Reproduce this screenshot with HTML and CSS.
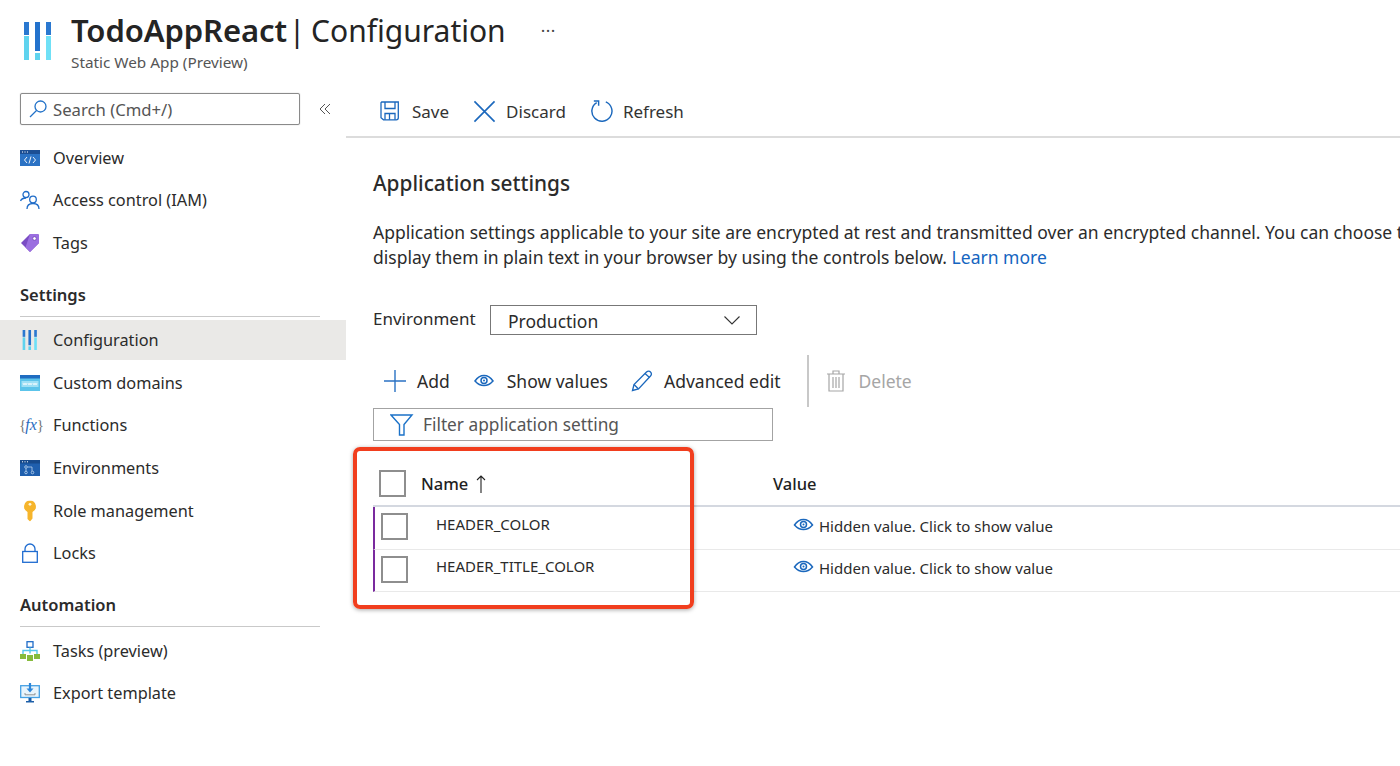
FILE: index.html
```html
<!DOCTYPE html>
<html lang="en">
<head>
<meta charset="utf-8">
<title>TodoAppReact | Configuration</title>
<link rel="stylesheet" href="styles.css">
</head>
<body>
<svg class="defs" width="0" height="0" aria-hidden="true">
  <symbol id="eye" viewBox="0 0 20 14">
    <path d="M1 7C3.500 3.200 6.500 1.400 10 1.400S16.500 3.200 19 7C16.500 9.800 13.500 11.600 10 11.600S3.500 9.800 1 7Z" fill="none" stroke="#1b68bd" stroke-width="1.500"/>
    <circle cx="10" cy="6.400" r="3" fill="none" stroke="#1b68bd" stroke-width="1.500"/>
    <circle cx="10" cy="6.400" r="1" fill="#1b68bd"/>
  </symbol>
  <symbol id="sliders" viewBox="0 0 28 38">
    <rect x="0" y="0" width="5" height="13" fill="#2a78d0"/>
    <rect x="0" y="14" width="5" height="24" fill="#5fd3ee"/>
    <rect x="11" y="0" width="5" height="29" fill="#2372cc"/>
    <rect x="11" y="31" width="5" height="7" fill="#5fd3ee"/>
    <rect x="22" y="0" width="5" height="13" fill="#2a78d0"/>
    <rect x="22" y="14" width="5" height="24" fill="#6fe0f6"/>
  </symbol>
</svg>

<header class="page-head">
  <svg class="head-icon" width="28" height="38"><use href="#sliders"/></svg>
  <div class="head-text">
    <div class="title-row">
      <h1 class="title"><b>TodoAppReact</b><span class="title-rest"> | Configuration</span></h1>
      <span class="more">···</span>
    </div>
    <div class="subtitle">Static Web App (Preview)</div>
  </div>
</header>

<div class="shell">
  <nav class="sidebar">
    <div class="search-row">
      <div class="search">
        <svg width="20" height="20" viewBox="0 0 20 20"><circle cx="12.500" cy="7.500" r="5.500" fill="none" stroke="#2272c8" stroke-width="1.300"/><path d="M8.500 11.500L2 18" stroke="#2272c8" stroke-width="1.300"/></svg>
        <span>Search (Cmd+/)</span>
      </div>
      <svg class="collapse" width="12" height="12" viewBox="0 0 12 12"><path d="M6 1L1 6l5 5M11 1L6 6l5 5" fill="none" stroke="#555" stroke-width="1"/></svg>
    </div>

    <a class="item">
      <svg class="ico" width="20" height="16" viewBox="0 0 20 16"><rect width="20" height="16" fill="#2b72c4"/><rect width="20" height="4" fill="#1c4f94"/><path d="M2 2h1M4.500 2h1M7 2h1" stroke="#fff"/><path d="M7 7l-2.500 3L7 13M13 7l2.500 3L13 13M11 6.500l-2 7" stroke="#fff" fill="none" stroke-width=".9"/></svg>
      <span>Overview</span>
    </a>
    <a class="item">
      <svg class="ico" width="20" height="20" viewBox="0 0 20 20" fill="none" stroke="#1f6cc8" stroke-width="1.300"><circle cx="6" cy="4.500" r="3"/><path d="M.5 11c.8-2 2.800-3 5.500-3"/><circle cx="13" cy="9.500" r="3.300"/><path d="M7 19c0-3.500 2.500-5.500 6-5.500s6 2 6 5.500"/></svg>
      <span>Access control (IAM)</span>
    </a>
    <a class="item">
      <svg class="ico" width="20" height="20" viewBox="0 0 20 20"><path d="M10 1h7.500a1.500 1.500 0 0 1 1.500 1.500V10l-9 9-9-9Z" fill="#7a4cc4"/><path d="M10 1h7.500a1.500 1.500 0 0 1 1.500 1.500V10l-9 9-4.500-4.500Z" fill="#9b6fe0"/><circle cx="14.500" cy="5.500" r="1.800" fill="#fff" stroke="#6a3fb0" stroke-width=".7"/></svg>
      <span>Tags</span>
    </a>

    <div class="section">Settings</div>
    <a class="item active">
      <svg class="ico" width="16" height="20"><use href="#sliders"/></svg>
      <span>Configuration</span>
    </a>
    <a class="item">
      <svg class="ico" width="20" height="16" viewBox="0 0 20 16"><rect width="20" height="16" fill="#5cc4ea"/><rect width="20" height="3.500" fill="#1f6cc0"/><rect x="1.500" y="6" width="17" height="6" fill="#9fe0f5"/><path d="M3 8l1 2 1-2 1 2 1-2M8 8l1 2 1-2 1 2 1-2M13 8l1 2 1-2 1 2 1-2" stroke="#fff" stroke-width=".7" fill="none"/></svg>
      <span>Custom domains</span>
    </a>
    <a class="item">
      <span class="fx"><i class="brace">{</i><i class="fx-f">fx</i><i class="brace">}</i></span>
      <span>Functions</span>
    </a>
    <a class="item">
      <svg class="ico" width="20" height="16" viewBox="0 0 20 16"><rect width="20" height="16" fill="#1f5fae"/><rect width="20" height="3.500" fill="#174a8c"/><path d="M2 1.800h1M4.500 1.800h1M7 1.800h1" stroke="#fff"/><circle cx="6" cy="7" r="1.300" fill="none" stroke="#cfe3f7" stroke-width=".7"/><circle cx="6" cy="12.500" r="1.300" fill="none" stroke="#cfe3f7" stroke-width=".7"/><circle cx="12.500" cy="12.500" r="1.300" fill="none" stroke="#cfe3f7" stroke-width=".7"/><path d="M7.500 7h4.500v4M6 8.500v2.500" stroke="#cfe3f7" stroke-width=".7" fill="none"/></svg>
      <span>Environments</span>
    </a>
    <a class="item">
      <svg class="ico key" width="14" height="21" viewBox="0 0 14 21"><path d="M7 0a6 6 0 0 1 2.500 11.400V18L7 21l-2.500-2.500V11.400A6 6 0 0 1 7 0Z" fill="#f6b52c"/><circle cx="7" cy="3.800" r="1.400" fill="#fff6d8"/></svg>
      <span>Role management</span>
    </a>
    <a class="item">
      <svg class="ico lock" width="16" height="20" viewBox="0 0 16 20" fill="none" stroke="#1f6cd0" stroke-width="1.300"><rect x=".7" y="8.500" width="14.600" height="10.800"/><path d="M3 8.500V6a5 5 0 0 1 10 0v2.500"/></svg>
      <span>Locks</span>
    </a>

    <div class="section automation">Automation</div>
    <a class="item tasks">
      <svg class="ico" width="20" height="20" viewBox="0 0 20 20"><rect x="7" y=".7" width="6" height="5.600" fill="#fff" stroke="#1f6cc8" stroke-width="1.300"/><path d="M10 6.500v6M3 13V9.500h14V13" stroke="#55c8ea" stroke-width="1.400" fill="none"/><rect y="13" width="6" height="5" fill="#86bb3c"/><rect x="7" y="14" width="6" height="6" fill="#86bb3c"/><rect x="14" y="13" width="6" height="5" fill="#86bb3c"/></svg>
      <span>Tasks (preview)</span>
    </a>
    <a class="item">
      <svg class="ico" width="20" height="20" viewBox="0 0 20 20"><rect x=".7" y="2.700" width="18.600" height="11.800" fill="#e8f4fc" stroke="#45a0e4" stroke-width="1.300"/><path d="M10 0v6.500" stroke="#2f86d8" stroke-width="2.200"/><path d="M6.500 5.500h7L10 9.500Z" fill="#2f86d8"/><path d="M5 10v1.800h10V10" stroke="#888" stroke-width=".9" fill="none"/><path d="M8.500 15h3v3h2.500v1.500H6V18h2.500Z" fill="#1c5ea8"/></svg>
      <span>Export template</span>
    </a>
  </nav>

  <main class="main">
    <div class="toolbar">
      <a class="tool save">
        <svg width="20" height="20" viewBox="0 0 20 20" fill="none" stroke="#1b68bd" stroke-width="1.300"><path d="M1.700 1h16.600v15.800a2 2 0 0 1-2 2H3.500L1 16.800V1.700Z"/><path d="M5 1v6.500h10V1M5 18.800v-6.300h10v6.300M9.500 12.500v6.300"/></svg>
        <span>Save</span>
      </a>
      <a class="tool">
        <svg width="23" height="23" viewBox="0 0 24 24"><path d="M1.500 1.500l21 21M22.500 1.500l-21 21" stroke="#1b68bd" stroke-width="1.700"/></svg>
        <span>Discard</span>
      </a>
      <a class="tool">
        <svg width="23" height="24" viewBox="0 0 24 24" fill="none" stroke="#1b68bd" stroke-width="1.500"><path d="M7 3.200A10.500 10.500 0 1 0 16.500 2.500"/><path d="M4 1.500H9V6.500"/></svg>
        <span>Refresh</span>
      </a>
    </div>

    <div class="content">
      <h2 class="heading">Application settings</h2>
      <p class="desc">Application settings applicable to your site are encrypted at rest and transmitted over an encrypted channel. You can choose to<br>display them in plain text in your browser by using the controls below. <a class="link">Learn more</a></p>

      <div class="env-row">
        <label class="env-label">Environment</label>
        <div class="select">
          <span class="select-value">Production</span>
          <svg width="16" height="9" viewBox="0 0 16 9"><path d="M.5.500L8 8 15.500.500" fill="none" stroke="#333" stroke-width="1.100"/></svg>
        </div>
      </div>

      <div class="commands">
        <a class="cmd add">
          <svg width="22" height="22" viewBox="0 0 22 22"><path d="M0 11h22M11 0v22" stroke="#2a72c4" stroke-width="1.400"/></svg>
          <span>Add</span>
        </a>
        <a class="cmd show">
          <svg width="20" height="14"><use href="#eye"/></svg>
          <span>Show values</span>
        </a>
        <a class="cmd edit">
          <svg width="22" height="22" viewBox="0 0 22 22" fill="none" stroke="#1b68bd" stroke-width="1.300"><path d="M1.500 20.500l1.500-6L15.500 2c1.300-1.300 3-1.300 4 0 1.200 1.200 1 2.800 0 4L7.500 19Z"/><path d="M3 14.500l4.500 4.500M14 3.500l4.500 4"/></svg>
          <span>Advanced edit</span>
        </a>
        <span class="divider"></span>
        <a class="cmd del">
          <svg width="18" height="22" viewBox="0 0 18 22" fill="none" stroke="#a6a6a6" stroke-width="1.200"><path d="M0 4h18M6 4V1h6v3M2 4v17h14V4M6 7v11M9 7v11M12 7v11"/></svg>
          <span>Delete</span>
        </a>
      </div>

      <div class="filter">
        <svg width="24" height="22" viewBox="0 0 24 22" fill="none" stroke="#1b72c8" stroke-width="1.400"><path d="M1 1h21l-8 9.500V21H9.500V10.500Z"/></svg>
        <span>Filter application setting</span>
      </div>

      <div class="table">
        <div class="row head-row">
          <span class="check head-check"></span>
          <span class="col-name"><b>Name</b><svg class="sort" width="10" height="18" viewBox="0 0 10 18"><path d="M5 18V1M1 5l4-4 4 4" fill="none" stroke="#222" stroke-width="1.100"/></svg></span>
          <span class="col-value"><b>Value</b></span>
        </div>
        <div class="row data-row">
          <span class="check"></span>
          <span class="cell-name">HEADER_COLOR</span>
          <span class="cell-value"><svg width="21" height="14"><use href="#eye"/></svg><span>Hidden value. Click to show value</span></span>
        </div>
        <div class="row data-row">
          <span class="check"></span>
          <span class="cell-name">HEADER_TITLE_COLOR</span>
          <span class="cell-value"><svg width="21" height="14"><use href="#eye"/></svg><span>Hidden value. Click to show value</span></span>
        </div>
        <div class="callout"></div>
      </div>
    </div>
  </main>
</div>
</body>
</html>
```

FILE: styles.css
```css
* { box-sizing: border-box; }
html, body { margin: 0; height: 766px; overflow: hidden; background: #fff; }
body { width: 1400px; font-family: "Noto Sans", "Open Sans", sans-serif; color: #2b2b2b; font-size: 17px; }
.defs { position: absolute; }
a { color: inherit; text-decoration: none; }
h1, h2, p { margin: 0; font-weight: 400; }
svg { flex: none; display: block; }

.page-head { height: 90px; display: flex; padding: 11px 0 0 24px; }
.head-icon { margin: 11px 19px 0 0; }
.title-row { display: flex; align-items: center; height: 38px; }
.title { font-size: 31px; line-height: 38px; color: #242424; white-space: nowrap; }
.title b { font-weight: 600; letter-spacing: -.1px; }
.title-rest { font-size: 30px; word-spacing: -2px; margin-left: -4px; }
.more { margin-left: 35px; font-size: 17px; color: #444; letter-spacing: .5px; }
.subtitle { font-size: 15.300px; line-height: 22px; color: #555; margin-top: 2px; }

.shell { display: flex; height: 676px; }
.sidebar { width: 346px; flex: none; padding-top: 3px; }
.search-row { display: flex; align-items: center; padding-left: 20px; height: 32px; margin-bottom: 11.500px; }
.search { width: 280px; height: 32px; border: 1px solid #8a8a8a; border-radius: 2px; display: flex; align-items: center; gap: 5px; padding-left: 7px; color: #555; font-size: 16.700px; box-shadow: 0 0 1px #999; }
.collapse { margin-left: 19px; }

.item { height: 42.600px; display: flex; align-items: center; padding-left: 53px; position: relative; font-size: 16.300px; color: #2b2b2b; white-space: nowrap; }
.item .ico { position: absolute; left: 20px; top: 50%; transform: translateY(-50%); }
.item .key { left: 23px; }
.item .lock { left: 22px; }
.item.active { background: #eae9e7; height: 40px; margin-top: 3px; margin-bottom: 1.800px; }
.item.active .ico { left: 22px; }
.fx { position: absolute; left: 20px; display: flex; align-items: center; font-family: "Liberation Serif", serif; }
.brace { font-style: normal; color: #777; font-size: 15px; margin: 0 -1px; }
.fx-f { color: #2a6cc0; font-style: italic; font-size: 16px; padding-right: 1px; }

.section { margin: 10.500px 26px 0 20px; height: 42px; padding-top: 8px; border-bottom: 1px solid #c9c9c9; font-size: 16.500px; font-weight: 600; color: #2b2b2b; line-height: 24px; }
.section.automation { margin-top: 10.200px; }
.tasks { margin-top: 2.800px; }

.main { flex: 1; min-width: 0; }
.toolbar { height: 48px; border-bottom: 2px solid #dcdcdc; display: flex; align-items: center; padding: 0 0 4px 34px; gap: 24px; }
.tool { display: flex; align-items: center; gap: 10px; font-size: 17px; color: #333; }
.tool.save { gap: 12px; }
.content { padding-left: 27px; width: 1054px; }
.heading { font-size: 20.800px; font-weight: 500; color: #2b2b2b; line-height: 30px; margin-top: 30px; }
.desc { font-size: 17.500px; line-height: 25px; margin-top: 22px; white-space: nowrap; color: #2b2b2b; }
.link { color: #1565c0; }

.env-row { display: flex; align-items: center; margin-top: 35px; height: 30px; }
.env-label { width: 117px; font-size: 17px; position: relative; top: -2px; }
.select { width: 267px; height: 30px; border: 1px solid #777; display: flex; align-items: center; justify-content: space-between; padding: 0 16px 0 17px; font-size: 17.500px; }
.select-value { position: relative; top: 1px; }

.commands { display: flex; align-items: center; height: 52px; margin-top: 20px; padding-left: 11px; font-size: 17.500px; }
.cmd { display: flex; align-items: center; gap: 11px; }
.show { margin-left: 24px; }
.show span { margin-left: 2px; }
.edit { margin-left: 23px; }
.divider { width: 2px; height: 52px; background: #c8c8c8; margin: 0 18px 0 26px; }
.del { color: #a6a6a6; }
.del span { margin-left: 3px; }

.filter { width: 400px; height: 33px; margin-top: 1px; border: 1px solid #a3a3a3; display: flex; align-items: center; gap: 9px; padding-left: 16px; font-size: 17.300px; color: #555; }

.table { position: relative; margin-top: 8px; width: 1027px; }
.row { display: flex; align-items: center; position: relative; }
.head-row { height: 58px; border-bottom: 2px solid #d4d8e0; padding-top: 13px; }
.data-row { height: 42.500px; border-bottom: 1px solid #e9e9e9; border-left: 2px solid #7a2a9e; }
.check { width: 27px; height: 27px; border: 2px solid #8e8e8e; flex: none; }
.head-check { margin-left: 6px; }
.data-row .check { margin-left: 6px; position: relative; top: -1px; }
.col-name { display: flex; align-items: center; gap: 8px; width: 352px; margin-left: 15px; font-size: 16.500px; color: #1f1f1f; }
.col-name b, .col-value b { font-weight: 500; }
.col-value { font-size: 16.500px; color: #1f1f1f; }
.cell-name { width: 357px; margin-left: 28px; font-size: 15px; color: #2b2b2b; position: relative; top: -4px; }
.cell-value { display: flex; align-items: center; gap: 5px; font-size: 15px; color: #2b2b2b; position: relative; top: -2px; }
.cell-value svg { position: relative; top: -1px; }
.callout { position: absolute; left: -20px; top: -2px; width: 341px; height: 162px; border: 4px solid #f13e1e; border-radius: 7px; box-shadow: 0 1px 4px rgba(0,0,0,.35); pointer-events: none; }
```
